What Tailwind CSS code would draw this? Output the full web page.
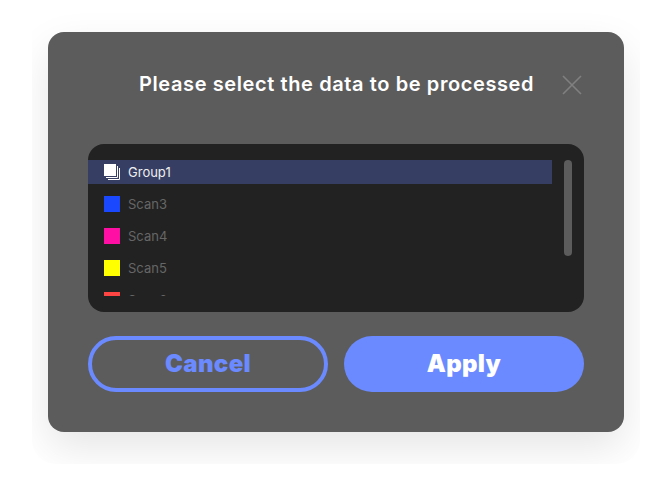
<!DOCTYPE html>
<html lang="en">
<head>
  <meta charset="UTF-8" />
  <title>Select data</title>
  <script src="https://cdn.jsdelivr.net/npm/@tailwindcss/browser@4"></script>
</head>
<body class="bg-white h-[496px] overflow-hidden">

  <!-- clips the shadow, the reference has a hard edge on it -->
  <div class="ml-[32px] w-[608px] h-[464px] pt-[32px] px-[16px] overflow-hidden rounded-b-[24px]">
    <div class="w-[576px] h-[400px] bg-[#5c5c5c] rounded-[16px] shadow-[0_16px_40px_rgba(0,0,0,0.1)] px-[40px] flex flex-col">

      <!-- Header -->
      <div class="h-[112px] flex items-start">
        <h1 class="ml-[51px] mt-[38px] text-white text-[20px] leading-[28px] font-semibold font-['Inter',sans-serif] tracking-[0.6px] whitespace-nowrap">Please select the data to be processed</h1>
        <svg class="ml-auto mt-[43px] mr-[2px]" width="20" height="20" viewBox="0 0 20 20" fill="none" stroke="#808080" stroke-width="1.6"><path d="M1 1L19 19M19 1L1 19"/></svg>
      </div>

      <!-- List -->
      <div class="relative h-[168px] bg-[#222222] rounded-[16px] pt-[16px] font-['Inter',sans-serif] text-[13px]">
        <div class="h-[136px] overflow-hidden flex flex-col gap-[8px]">
          <div class="w-[464px] h-[24px] shrink-0 bg-[#363e63] flex items-center pl-[16px] gap-[8px] text-[#eeeeee]">
            <svg width="16" height="16" viewBox="0 0 16 16" fill="none"><rect x="0" y="0" width="12" height="12" fill="#fff"/><path d="M13.5 2V13.5H2M15.5 4V15.5H4" stroke="#fff" stroke-width="1"/></svg>
            <span class="pt-[2px]">Group1</span>
          </div>
          <div class="h-[24px] shrink-0 flex items-center pl-[16px] gap-[8px] text-[#666666]"><span class="w-[16px] h-[16px] bg-[#1a48ff]"></span><span class="pt-[2px]">Scan3</span></div>
          <div class="h-[24px] shrink-0 flex items-center pl-[16px] gap-[8px] text-[#666666]"><span class="w-[16px] h-[16px] bg-[#ff0fa3]"></span><span class="pt-[2px]">Scan4</span></div>
          <div class="h-[24px] shrink-0 flex items-center pl-[16px] gap-[8px] text-[#666666]"><span class="w-[16px] h-[16px] bg-[#ffff00]"></span><span class="pt-[2px]">Scan5</span></div>
          <div class="h-[24px] shrink-0 flex items-center pl-[16px] gap-[8px] text-[#666666]"><span class="w-[16px] h-[16px] bg-[#ff4444]"></span><span class="pt-[2px]">Scan6</span></div>
        </div>
        <!-- scrollbar -->
        <div class="absolute top-[16px] right-[12px] w-[8px] h-[96px] rounded-full bg-[#5c5c5c]"></div>
      </div>

      <!-- Buttons -->
      <div class="mt-[24px] flex gap-[16px] font-['Inter',sans-serif] text-[24px] font-black tracking-[0.3px]">
        <button class="w-[240px] h-[56px] rounded-full border-4 border-[#6b8aff] text-[#6b8aff]">Cancel</button>
        <button class="w-[240px] h-[56px] rounded-full bg-[#6b8aff] text-white">Apply</button>
      </div>
    </div>
  </div>

</body>
</html>
